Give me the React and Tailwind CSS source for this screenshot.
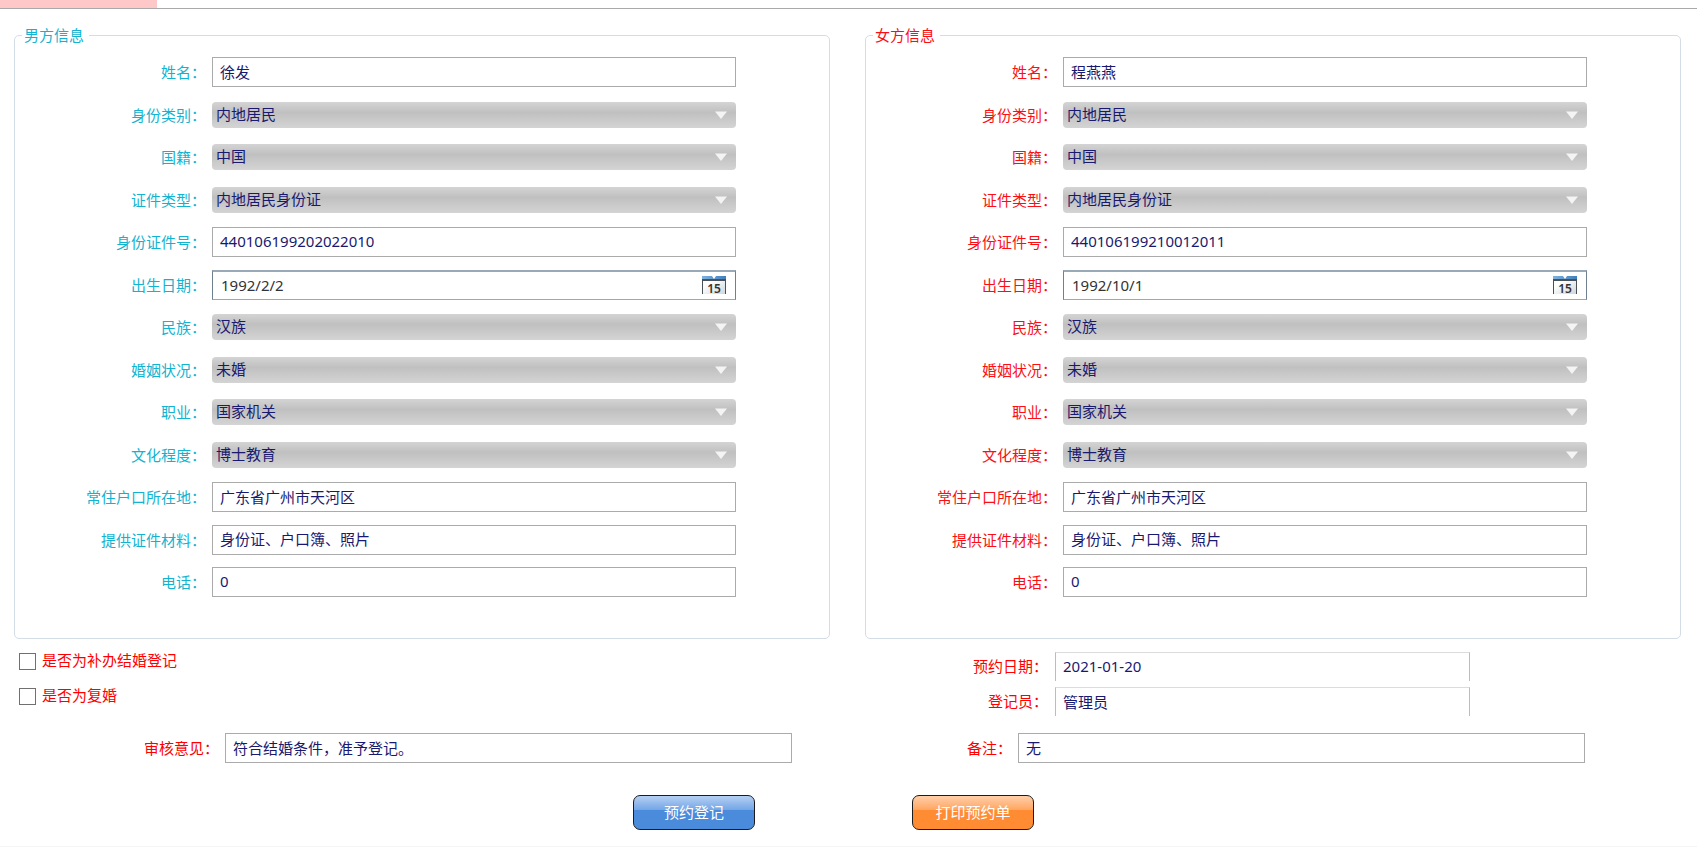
import React from 'react';

const ID_TYPES = ['内地居民', '香港居民', '澳门居民', '台湾居民', '华侨'];
const NATIONS = ['中国'];
const CERT_TYPES = ['内地居民身份证', '护照'];
const ETHNICS = ['汉族', '满族', '回族', '壮族'];
const MARITAL = ['未婚', '离婚', '丧偶'];
const JOBS = ['国家机关', '企业', '其他'];
const EDUCATION = ['博士教育', '硕士教育', '大学本科', '其他'];

const FIELDS = [
  { key: 'name', label: '姓名', type: 'text' },
  { key: 'idType', label: '身份类别', type: 'select', options: ID_TYPES },
  { key: 'nation', label: '国籍', type: 'select', options: NATIONS },
  { key: 'certType', label: '证件类型', type: 'select', options: CERT_TYPES },
  { key: 'certNo', label: '身份证件号', type: 'text' },
  { key: 'birthday', label: '出生日期', type: 'date' },
  { key: 'ethnic', label: '民族', type: 'select', options: ETHNICS },
  { key: 'marital', label: '婚姻状况', type: 'select', options: MARITAL },
  { key: 'job', label: '职业', type: 'select', options: JOBS },
  { key: 'education', label: '文化程度', type: 'select', options: EDUCATION },
  { key: 'address', label: '常住户口所在地', type: 'text' },
  { key: 'materials', label: '提供证件材料', type: 'text' },
  { key: 'phone', label: '电话', type: 'text' },
];

const COMMON = {
  idType: '内地居民',
  nation: '中国',
  certType: '内地居民身份证',
  ethnic: '汉族',
  marital: '未婚',
  job: '国家机关',
  education: '博士教育',
  address: '广东省广州市天河区',
  materials: '身份证、户口簿、照片',
  phone: '0',
};

const MALE = { ...COMMON, name: '徐发', certNo: '440106199202022010', birthday: '1992/2/2' };
const FEMALE = { ...COMMON, name: '程燕燕', certNo: '440106199210012011', birthday: '1992/10/1' };

function TextBox({ id, value }) {
  return (
    <input
      id={id}
      type="text"
      defaultValue={value}
      className="h-[30px] w-full min-w-0 border border-[#ababab] bg-white px-[7px] pb-[2px] text-[#191970] outline-none"
    />
  );
}

function SelectBox({ id, value, options }) {
  return (
    <div className="relative h-[26px] w-full">
      <select
        id={id}
        defaultValue={value}
        className="block h-full w-full appearance-none rounded bg-linear-to-b from-[#d4d4d4] via-[#c0c0c0] via-40% to-[#d4d4d4] px-1 pb-[2px] text-[#191970] outline-none"
      >
        {options.map((o) => (
          <option key={o}>{o}</option>
        ))}
      </select>
      <svg className="pointer-events-none absolute top-[9px] right-[9px]" width="12" height="8" viewBox="0 0 12 8">
        <path d="M0 0.5h12L6 8z" fill="#f4f4f4" />
      </svg>
    </div>
  );
}

function CalendarIcon() {
  return (
    <svg className="overflow-visible" width="24" height="18" viewBox="0 0 24 18">
      <defs>
        <linearGradient id="calPage" x1="0" y1="0" x2="1" y2="1">
          <stop offset="0.3" stopColor="#ffffff" />
          <stop offset="1" stopColor="#cfd5da" />
        </linearGradient>
        <linearGradient id="calTop" x1="0" y1="0" x2="1" y2="0">
          <stop offset="0" stopColor="#7cb3e0" />
          <stop offset="1" stopColor="#3f7fbd" />
        </linearGradient>
      </defs>
      <rect x="0" y="2" width="24" height="16" fill="url(#calPage)" />
      <path d="M0 0h10l2 3 2-3h10v3H0z" fill="url(#calTop)" />
      <path d="M0 3h24v15h-1V5H1v13H0z" fill="#4c5158" />
      <text x="12" y="17" textAnchor="middle" fontSize="12" fontWeight="600" fontFamily="Noto Sans" fill="#333333">
        15
      </text>
    </svg>
  );
}

function DateBox({ id, value }) {
  return (
    <div className="flex h-[30px] w-full items-center border border-t-2 border-[#9aa9b8] border-r-[#6f8191] border-l-[#6f8191] bg-white pr-[9px] pl-2">
      <input id={id} type="text" defaultValue={value} className="w-full min-w-0 flex-1 text-[#333333] outline-none" />
      <button type="button" aria-label="选择日期">
        <CalendarIcon />
      </button>
    </div>
  );
}

function Field({ id, field, value }) {
  if (field.type === 'select') return <SelectBox id={id} value={value} options={field.options} />;
  if (field.type === 'date') return <DateBox id={id} value={value} />;
  return <TextBox id={id} value={value} />;
}

function PersonPanel({ prefix, title, color, data }) {
  return (
    <fieldset className={`min-w-0 rounded-[5px] border border-[#d3dde6] pt-3 pr-[93px] pb-[41px] ${color}`}>
      <legend className="ml-[7px] pr-[5px] pl-[2px] leading-5">{title}</legend>
      <div className="flex min-h-[540px] flex-col justify-between">
        {FIELDS.map((f) => (
          <div key={f.key} className="flex h-[30px] items-center gap-1.5">
            <label htmlFor={`${prefix}-${f.key}`} className="w-[191px] shrink-0 text-right">
              {f.label}：
            </label>
            <Field id={`${prefix}-${f.key}`} field={f} value={data[f.key]} />
          </div>
        ))}
      </div>
    </fieldset>
  );
}

function CheckRow({ id, label }) {
  return (
    <div className="flex h-[35px] items-start gap-1.5">
      <input id={id} type="checkbox" className="mt-[3px] size-[17px] appearance-none border border-[#707070] bg-white checked:bg-[#4a8bdc]" />
      <label htmlFor={id} className="leading-5">
        {label}
      </label>
    </div>
  );
}

/* read-only info row, the box has no bottom border */
function InfoRow({ id, label, value }) {
  return (
    <div className="flex items-center gap-[7px]">
      <label htmlFor={id} className="w-[183px] shrink-0 pb-[2px] text-right">
        {label}：
      </label>
      <input
        id={id}
        type="text"
        readOnly
        defaultValue={value}
        className="h-[29px] w-full min-w-0 border-x border-t border-x-[#bcbcbc] border-t-[#dcdcdc] bg-white px-[7px] pb-[2px] text-[#191970] outline-none"
      />
    </div>
  );
}

export default function App() {
  return (
    <div
      lang="zh-CN"
      className="bg-white font-['Noto_Sans','Noto_Sans_CJK_SC',sans-serif] text-[15px] leading-[22px] text-[#ff0000]"
    >
      <header className="border-b border-[#a9a9a9]">
        <div className="h-2 w-[157px] bg-[#ffc8c8]" />
      </header>

      <form className="border-b border-[#f5f5f5] pt-4 pr-4 pb-4 pl-[14px]" onSubmit={(e) => e.preventDefault()}>
        <div className="grid grid-cols-2 gap-x-[35px]">
          <PersonPanel prefix="male" title="男方信息" color="text-[#12b3d0]" data={MALE} />
          <PersonPanel prefix="female" title="女方信息" color="text-[#fb0f14]" data={FEMALE} />

          <div className="pt-[11px] pl-[5px]">
            <CheckRow id="reissue" label="是否为补办结婚登记" />
            <CheckRow id="remarry" label="是否为复婚" />
          </div>
          <div className="flex flex-col gap-1.5 pt-[13px] pr-[211px]">
            <InfoRow id="bookDate" label="预约日期" value="2021-01-20" />
            <InfoRow id="registrar" label="登记员" value="管理员" />
          </div>

          <div className="flex items-center gap-1.5 pt-[13px] pr-[38px]">
            <label htmlFor="opinion" className="w-[205px] shrink-0 text-right">
              审核意见：
            </label>
            <TextBox id="opinion" value="符合结婚条件，准予登记。" />
          </div>
          <div className="flex items-center gap-1.5 pt-[13px] pr-24">
            <label htmlFor="remark" className="w-[147px] shrink-0 text-right">
              备注：
            </label>
            <TextBox id="remark" value="无" />
          </div>
        </div>

        <div className="flex justify-center gap-[157px] pt-8 pr-7">
          <button
            type="submit"
            className="h-[35px] w-[122px] rounded-[7px] border border-[#1c1c1c] bg-linear-to-b from-[#b4d0f3] from-0% via-[#74a6e6] via-42% to-[#4a8bdc] to-42% pb-[2px] text-white"
          >
            预约登记
          </button>
          <button
            type="button"
            className="h-[35px] w-[122px] rounded-[7px] border border-[#1c1c1c] bg-linear-to-b from-[#ffcfa8] from-0% via-[#ffa55f] via-42% to-[#ff8c32] to-42% pb-[2px] text-white"
          >
            打印预约单
          </button>
        </div>
      </form>
    </div>
  );
}
